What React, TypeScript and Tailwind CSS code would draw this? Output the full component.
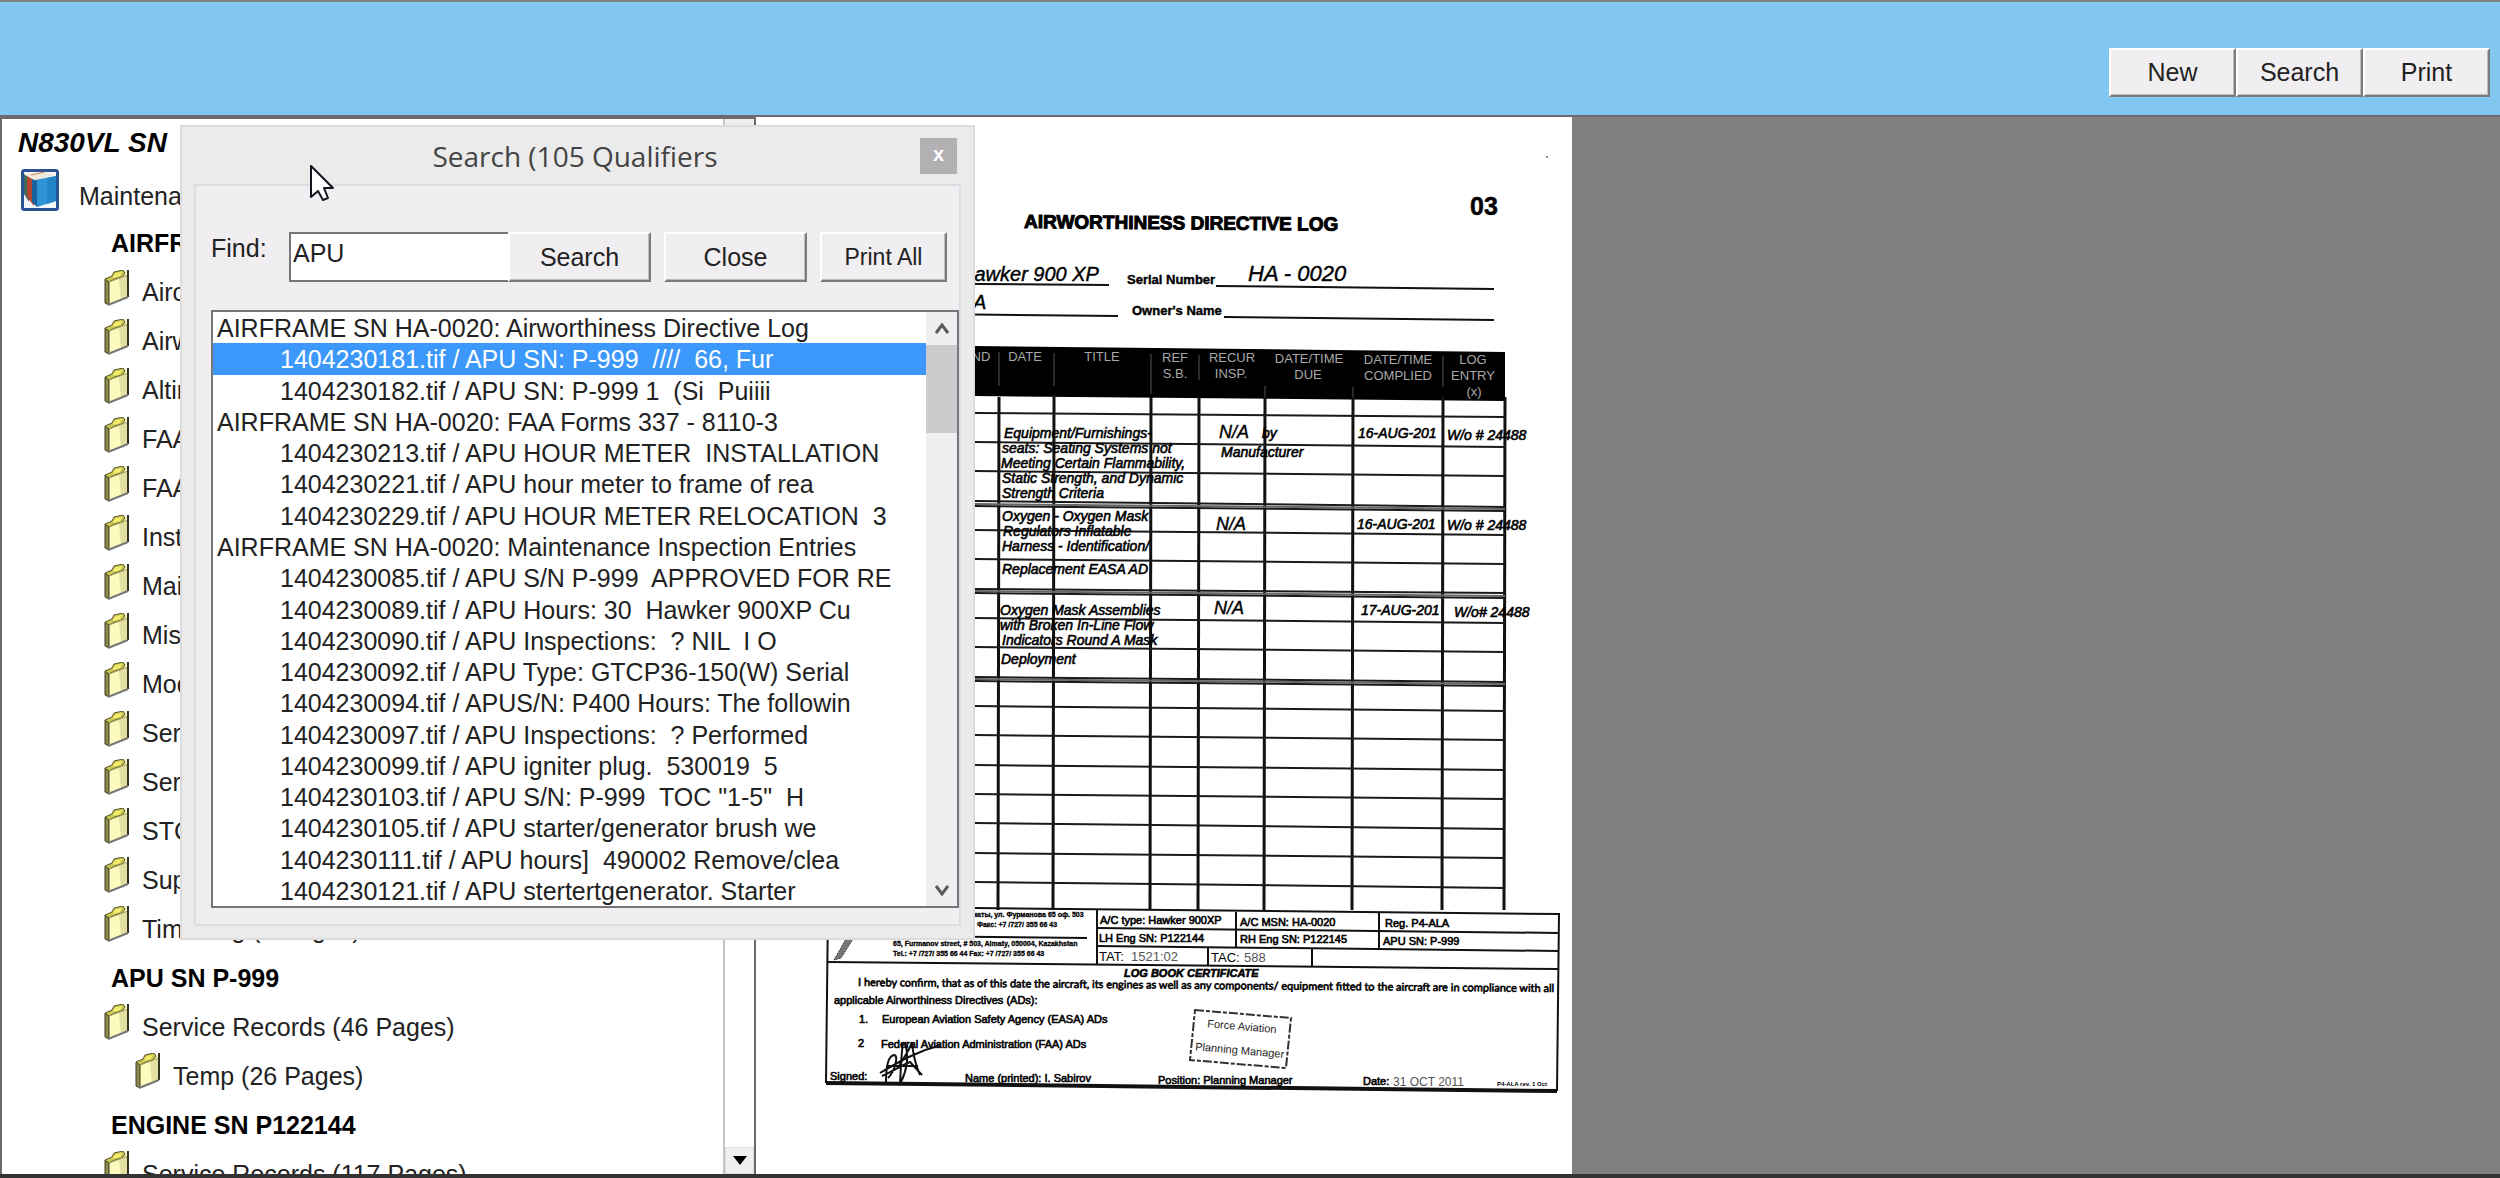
import { clsx } from 'clsx';

interface TreeItem {
  label: string;
  level: 0 | 1 | 2;
}

const tree: TreeItem[] = [
  { label: 'AIRFRAME SN HA-0020', level: 0 },
  { label: 'Aircraft Log', level: 1 },
  { label: 'Airworthiness Directive Log', level: 1 },
  { label: 'Altimeter Log', level: 1 },
  { label: 'FAA Forms 337 - 8110-3', level: 1 },
  { label: 'FAA Forms', level: 1 },
  { label: 'Installed Equipment', level: 1 },
  { label: 'Maintenance Inspection Entries', level: 1 },
  { label: 'Miscellaneous', level: 1 },
  { label: 'Modifications', level: 1 },
  { label: 'Service Bulletins', level: 1 },
  { label: 'Service Records', level: 1 },
  { label: 'STC', level: 1 },
  { label: 'Supplements', level: 1 },
  { label: 'Time Log (4 Pages)', level: 1 },
  { label: 'APU SN P-999', level: 0 },
  { label: 'Service Records (46 Pages)', level: 1 },
  { label: 'Temp (26 Pages)', level: 2 },
  { label: 'ENGINE SN P122144', level: 0 },
  { label: 'Service Records (117 Pages)', level: 1 },
];

const results = [
  { text: 'AIRFRAME SN HA-0020: Airworthiness Directive Log', group: true },
  { text: '1404230181.tif / APU SN: P-999  ////  66, Fur', selected: true },
  { text: '1404230182.tif / APU SN: P-999 1  (Si  Puiiii' },
  { text: 'AIRFRAME SN HA-0020: FAA Forms 337 - 8110-3', group: true },
  { text: '1404230213.tif / APU HOUR METER  INSTALLATION' },
  { text: '1404230221.tif / APU hour meter to frame of rea' },
  { text: '1404230229.tif / APU HOUR METER RELOCATION  3' },
  { text: 'AIRFRAME SN HA-0020: Maintenance Inspection Entries', group: true },
  { text: '1404230085.tif / APU S/N P-999  APPROVED FOR RE' },
  { text: '1404230089.tif / APU Hours: 30  Hawker 900XP Cu' },
  { text: '1404230090.tif / APU Inspections:  ? NIL  I O' },
  { text: '1404230092.tif / APU Type: GTCP36-150(W) Serial' },
  { text: '1404230094.tif / APUS/N: P400 Hours: The followin' },
  { text: '1404230097.tif / APU Inspections:  ? Performed' },
  { text: '1404230099.tif / APU igniter plug.  530019  5' },
  { text: '1404230103.tif / APU S/N: P-999  TOC "1-5"  H' },
  { text: '1404230105.tif / APU starter/generator brush we' },
  { text: '1404230111.tif / APU hours]  490002 Remove/clea' },
  { text: '1404230121.tif / APU stertertgenerator. Starter' },
];

const buttonClass =
  'flex items-center justify-center border-2 border-t-white border-l-white border-r-[#7d7b7e] border-b-[#7d7b7e] bg-[#f0eef1] leading-none text-[#222] shadow-[inset_-1px_-1px_0_#bbb]';

function BookIcon() {
  return (
    <svg viewBox="0 0 38 43" className="h-[43px] w-[38px] shrink-0" aria-hidden>
      <rect x="1.5" y="1.5" width="35" height="39" rx="2" fill="#f4f7fa" stroke="#2b5391" strokeWidth="3" />
      <path d="M3 5l5 4v24l-5-8z" fill="#3f6b5c" />
      <path d="M6 7l7 4v26l-7-9z" fill="#b5442f" />
      <path d="M3 5l16-2 16 3-20 5z" fill="#efe8da" />
      <path d="M10 6l14-3" stroke="#c9896d" />
      <path d="M14 11l21-4v25l-19 6z" fill="#2f94d3" />
      <path d="M11 10l5 2v26l-5-5z" fill="#17639d" />
      <path d="M26 9l9-2v25l-9 3z" fill="#2384c6" />
    </svg>
  );
}

function FolderIcon() {
  return (
    <svg viewBox="0 0 26 37" className="h-[37px] w-[26px] shrink-0" aria-hidden>
      <path d="M2 10L24 1v26L4 35z" fill="#fcfabd" />
      <path d="M15 9l8-4v22l-6 3z" fill="#e2dfa0" />
      <path d="M1 9l4 3v23l-4-2z" fill="#8c8a4c" stroke="#3a3a20" />
      <path d="M1 9l7-3 2-4 9-2 2 3-3 4-7 2-6 3z" fill="#c9c552" stroke="#55532a" />
      <path d="M9 6l3-3 6-1-2 4-6 2z" fill="#f2ee6c" />
      <path d="M5 12L24 5" stroke="#a5a268" />
      <path d="M24 0v27" stroke="#33331f" strokeWidth="2" />
      <path d="M4 35l20-8" stroke="#777" strokeWidth="2" />
    </svg>
  );
}

function Sidebar() {
  return (
    <aside className="flex w-[756px] shrink-0 border-t-2 border-r-2 border-l-2 border-[#6b6b6b] bg-white">
      <nav className="flex min-w-0 flex-1 flex-col overflow-hidden">
        <h1 className="pt-[6px] pl-4 text-[28px] leading-9 font-bold whitespace-nowrap text-black italic">
          N830VL SN
        </h1>
        <div className="flex h-[58px] shrink-0 items-center gap-5 pl-[19px]">
          <BookIcon />
          <a href="#" className="pt-3 text-[25px] leading-8">
            Maintenance Records
          </a>
        </div>
        <ul className="-mb-6 flex flex-1 flex-col">
          {tree.map((item, i) => (
            <li
              key={i}
              className={clsx(
                'flex flex-1 items-center gap-3',
                item.level === 0 && 'pl-[109px] font-bold text-black',
                item.level === 1 && 'pl-[102px]',
                item.level === 2 && 'pl-[133px]'
              )}
            >
              {item.level > 0 && (
                <span className="pb-2">
                  <FolderIcon />
                </span>
              )}
              <a href="#" className="text-[25px] leading-8 whitespace-nowrap">
                {item.label}
              </a>
            </li>
          ))}
        </ul>
      </nav>
      <div className="flex w-[31px] flex-col justify-between border-l-2 border-[#c4c4c4]">
        <button type="button" aria-label="Scroll up" className="h-7 bg-[#f0eef1]" />
        <button
          type="button"
          aria-label="Scroll down"
          className="flex h-[27px] items-center justify-center border border-[#ddd] bg-[#f0eef1]"
        >
          <svg viewBox="0 0 14 9" className="h-[9px] w-[14px]" aria-hidden>
            <path d="M0 0h14L7 9z" fill="#000" />
          </svg>
        </button>
      </div>
    </aside>
  );
}

// y on the left edge and on the right edge of every rule, the sheet was fed slightly askew
const rules = [
  [413, 417], [442, 447], [471, 476], [501, 507], [506, 511], [530, 535], [559, 564], [589, 593],
  [593, 598], [618, 623], [647, 652], [677, 682], [681, 686], [706, 711], [735, 740], [765, 770],
  [794, 799], [823, 829], [853, 858], [882, 888],
];

const columns = [999, 1054, 1151, 1199, 1265, 1353, 1443, 1505];

const headings: [number, number, string][] = [
  [981, 361, 'ND'], [1025, 361, 'DATE'], [1102, 361, 'TITLE'], [1175, 362, 'REF'], [1175, 378, 'S.B.'],
  [1232, 362, 'RECUR'], [1231, 378, 'INSP.'], [1309, 363, 'DATE/TIME'], [1308, 379, 'DUE'],
  [1398, 364, 'DATE/TIME'], [1398, 380, 'COMPLIED'], [1473, 364, 'LOG'], [1473, 380, 'ENTRY'], [1474, 396, '(x)'],
];

const notes: [number, number, string][] = [
  [1004, 438, 'Equipment/Furnishings-'],
  [1002, 453, 'seats: Seating Systems not'],
  [1001, 468, 'Meeting Certain Flammability,'],
  [1002, 483, 'Static Strength, and Dynamic'],
  [1002, 498, 'Strength Criteria'],
  [1002, 521, 'Oxygen - Oxygen Mask'],
  [1003, 536, 'Regulators Inflatable'],
  [1002, 551, 'Harness - Identification/'],
  [1002, 574, 'Replacement EASA AD'],
  [1000, 615, 'Oxygen Mask Assemblies'],
  [1000, 630, 'with Broken In-Line Flow'],
  [1002, 645, 'Indicators Round A Mask'],
  [1001, 664, 'Deployment'],
  [1221, 457, 'Manufacturer'],
  [1358, 438, '16-AUG-201'],
  [1447, 440, 'W/o # 24488'],
  [1357, 529, '16-AUG-201'],
  [1447, 530, 'W/o # 24488'],
  [1361, 615, '17-AUG-201'],
  [1454, 617, 'W/o# 24488'],
];

function ScannedPage() {
  return (
    <svg
      viewBox="756 117 816 1057"
      className="w-[816px] shrink-0 self-start bg-white"
      fontFamily="'Liberation Sans', Arial, sans-serif"
      role="img"
      aria-label="Airworthiness Directive Log, page 03"
    >
      <circle cx="1547" cy="157" r="1" fill="#666" />
      <text x="1024" y="228" fontSize="19" fontWeight="bold" stroke="#000" transform="rotate(0.5 1024 228)">
        AIRWORTHINESS DIRECTIVE LOG
      </text>
      <text x="1470" y="215" fontSize="25" fontWeight="bold" stroke="#000" strokeWidth="0.5">03</text>
      <g fontSize="13" fontWeight="bold" stroke="#000" strokeWidth="0.4">
        <text x="1127" y="284">Serial Number</text>
        <text x="1132" y="315">Owner's Name</text>
      </g>
      <g stroke="#111" strokeWidth="2">
        <path d="M840 283L1109 285M1216 286L1494 289M840 313L1118 316M1224 317L1494 320" />
      </g>
      <g fontSize="20" fontStyle="italic" stroke="#000" strokeWidth="0.4">
        <text x="960" y="281">Hawker 900 XP</text>
        <text x="1248" y="281" fontSize="22">HA - 0020</text>
        <text x="973" y="309">A</text>
      </g>

      {/* Directive table */}
      <path d="M820 345L975 346L1505 352V401L975 396L820 395z" fill="#000" />
      <g fontSize="13" fill="#a8a8a8" textAnchor="middle">
        {headings.map(([x, y, label]) => (
          <text key={`${x}-${y}`} x={x} y={y}>
            {label}
          </text>
        ))}
      </g>
      <path
        d="M999 352v34M1054 353v33M1151 354v40M1199 355v25M1265 386v12M1353 387v12M1443 356v31"
        stroke="#555"
      />
      <g stroke="#111" strokeWidth="3">
        {columns.map((x) => (
          <line key={x} x1={x} y1="397" x2={x - 1} y2="910" />
        ))}
      </g>
      <g stroke="#1a1a1a" strokeWidth="2">
        {rules.map(([left, right]) => (
          <line key={left} x1="975" y1={left} x2="1505" y2={right} />
        ))}
      </g>
      <path d="M975 504L1505 509M975 591L1505 596M975 679L1505 684" stroke="#666" strokeWidth="2" />
      <g fontSize="14" fontStyle="italic" stroke="#000" strokeWidth="0.6">
        {notes.map(([x, y, line]) => (
          <text key={`${x}-${y}`} x={x} y={y}>
            {line}
          </text>
        ))}
        <text x="1262" y="438">by</text>
      </g>
      <g fontSize="18" fontStyle="italic" stroke="#000" strokeWidth="0.4">
        <text x="1219" y="438">N/A</text>
        <text x="1216" y="530">N/A</text>
        <text x="1214" y="614">N/A</text>
      </g>

      {/* Certificate */}
      <g stroke="#111" strokeWidth="2" fill="none">
        <path d="M827 906L975 908L1559 914L1557 1091" />
        <path d="M828 906L826 1083" />
        <path d="M826 1083L1557 1091" strokeWidth="4" />
        <path d="M828 962L1558 969M1097 910V964M1236 912V947M1379 913V949M1208 947V965M1312 949V967" />
        <path d="M1097 928L1559 933M1097 946L1559 951M890 936L1087 938" />
      </g>
      <path d="M834 960l12-21h7l-12 19z" fill="#777" stroke="#333" strokeDasharray="2 1" />
      <g fontSize="7" fontWeight="bold" stroke="#000" strokeWidth="0.3">
        <text x="972" y="917">маты, ул. Фурманова 65 оф. 503</text>
        <text x="977" y="927">Факс: +7 /727/ 355 66 43</text>
        <text x="893" y="946">65, Furmanov street, # 503, Almaty, 050004, Kazakhstan</text>
        <text x="893" y="956">Tel.: +7 /727/ 355 66 44  Fax: +7 /727/ 355 66 43</text>
      </g>
      <g fontSize="11" stroke="#000" strokeWidth="0.6">
        <text x="1100" y="924">A/C type: Hawker 900XP</text>
        <text x="1240" y="926">A/C MSN: HA-0020</text>
        <text x="1385" y="927">Reg. P4-ALA</text>
        <text x="1099" y="942">LH Eng SN: P122144</text>
        <text x="1240" y="943">RH Eng SN: P122145</text>
        <text x="1383" y="945">APU SN: P-999</text>
        <text x="1124" y="977" fontWeight="bold" fontStyle="italic">LOG BOOK CERTIFICATE</text>
        <text x="858" y="986" fontFamily="Lato, sans-serif" transform="rotate(0.5 858 986)">
          I hereby confirm, that as of this date the aircraft, its engines as well as any components/ equipment fitted to the aircraft are in compliance with all
        </text>
        <text x="834" y="1004">applicable Airworthiness Directives (ADs):</text>
        <text x="859" y="1023">1.</text>
        <text x="882" y="1023">European Aviation Safety Agency (EASA) ADs</text>
        <text x="858" y="1047">2</text>
        <text x="881" y="1048">Federal Aviation Administration (FAA) ADs</text>
        <text x="830" y="1080">Signed:</text>
        <text x="965" y="1082">Name (printed): I. Sabirov</text>
        <text x="1158" y="1084">Position: Planning Manager</text>
        <text x="1363" y="1085">Date:</text>
      </g>
      <g fontSize="13">
        <text x="1099" y="961">TAT:</text>
        <text x="1211" y="962">TAC:</text>
      </g>
      <g fontSize="13" fill="#555">
        <text x="1131" y="961">1521:02</text>
        <text x="1244" y="962">588</text>
        <text x="1393" y="1086" fontSize="12">31 OCT 2011</text>
      </g>
      <text x="1497" y="1086" fontSize="6" fontWeight="bold">P4-ALA rev. 1 Oct</text>
      <path d="M1195 1010L1291 1018L1286 1068L1190 1060z" fill="none" stroke="#333" strokeWidth="2" strokeDasharray="9 2 4 2" />
      <g fontSize="11" fill="#222" transform="rotate(5 1193 1049)">
        <text x="1205" y="1026">Force Aviation</text>
        <text x="1195" y="1050">Planning Manager</text>
      </g>
      <path
        d="M880 1073c20-12 38-22 61-28M882 1076c10-4 22-12 28-14l12 13M886 1082c0-12 1-26 8-27 5 0 1 16-6 23M900 1083c1-14 1-28 3-40M905 1042c4 14 3 26-4 40M912 1042c1 12 4 24 8 33M898 1068c5-10 12-18 14-26M888 1066h30"
        fill="none"
        stroke="#111"
        strokeWidth="2"
      />
    </svg>
  );
}

function SearchDialog() {
  return (
    <section
      role="dialog"
      aria-labelledby="search-title"
      className="absolute top-[125px] left-[180px] flex h-[815px] w-[795px] flex-col border-2 border-[#dcdcdc] bg-[#ebebeb] px-3 pb-3"
    >
      <header className="flex h-[57px] shrink-0 items-center">
        <h2
          id="search-title"
          className="flex-1 pl-9 text-center font-['Open_Sans',sans-serif] text-[28px] leading-8 text-[#444]"
        >
          Search (105 Qualifiers
        </h2>
        <button
          type="button"
          aria-label="Close dialog"
          className="mr-1 flex h-9 w-[37px] items-center justify-center bg-[#b3b0b3] pb-1 text-[20px] leading-none font-bold text-white"
        >
          x
        </button>
      </header>
      <div className="flex min-h-0 flex-1 flex-col border-2 border-[#dedce0] bg-[#f0eef1] pt-[46px] pb-4 pl-[15px]">
        <form className="flex h-[50px] shrink-0 pr-3" onSubmit={(e) => e.preventDefault()}>
          <label htmlFor="find" className="w-[78px] text-[25px] leading-8 text-[#222]">
            Find:
          </label>
          <input
            id="find"
            type="text"
            defaultValue="APU"
            className="w-[219px] rounded-none border-2 border-r-0 border-[#77757a] bg-white pb-2 pl-[2px] text-[25px] leading-8 text-[#222] outline-none"
          />
          <button type="submit" className={clsx(buttonClass, 'w-[143px] text-[25px]')}>
            Search
          </button>
          <button type="button" className={clsx(buttonClass, 'ml-[13px] w-[143px] text-[25px]')}>
            Close
          </button>
          <button type="button" className={clsx(buttonClass, 'ml-[13px] w-[127px] text-[23px]')}>
            Print All
          </button>
        </form>
        <div className="mt-[28px] flex min-h-0 flex-1 border-2 border-[#77757a] bg-white">
          <ul role="listbox" aria-label="Results" className="flex min-w-0 flex-1 flex-col">
            {results.map((row) => (
              <li
                key={row.text}
                role="option"
                aria-selected={!!row.selected}
                className={clsx(
                  'flex min-h-0 flex-1 items-center overflow-hidden pt-[2px] text-[25px] leading-none whitespace-pre',
                  row.group ? 'pl-1' : 'pl-[67px]',
                  row.selected ? 'bg-[#3c98fb] text-white' : 'text-[#222]'
                )}
              >
                {row.text}
              </li>
            ))}
          </ul>
          <div className="flex w-[31px] flex-col bg-[#f0eef1]">
            <button type="button" aria-label="Scroll up" className="flex h-[33px] items-center justify-center">
              <svg viewBox="0 0 14 12" className="h-3 w-[14px]" aria-hidden>
                <path d="M1 10l6-8 6 8" fill="none" stroke="#5a5a5a" strokeWidth="3" />
              </svg>
            </button>
            <div className="h-[88px] bg-[#cdcbce]" />
            <button type="button" aria-label="Scroll down" className="mt-auto flex h-[33px] items-center justify-center">
              <svg viewBox="0 0 14 12" className="h-3 w-[14px]" aria-hidden>
                <path d="M1 2l6 8 6-8" fill="none" stroke="#5a5a5a" strokeWidth="3" />
              </svg>
            </button>
          </div>
        </div>
      </div>
    </section>
  );
}

export default function App() {
  return (
    <div className="relative flex h-screen flex-col overflow-hidden border-b-4 border-[#333] bg-[#808080] font-['Liberation_Sans',Arial,sans-serif] text-[#222]">
      <header className="flex h-[115px] shrink-0 items-end justify-end border-t-2 border-[#808080] bg-[#82c7f0] pr-[10px] pb-[18px] text-[25px]">
        <button type="button" className={clsx(buttonClass, 'h-[49px] w-[127px]')}>
          New
        </button>
        <button type="button" className={clsx(buttonClass, 'h-[49px] w-[127px]')}>
          Search
        </button>
        <button type="button" className={clsx(buttonClass, 'h-[49px] w-[127px]')}>
          Print
        </button>
      </header>
      <main className="flex min-h-0 flex-1 border-t-2 border-[#6b6b6b]">
        <Sidebar />
        <ScannedPage />
      </main>

      <SearchDialog />

      <svg viewBox="0 0 24 38" className="absolute top-[164px] left-[310px] h-[38px] w-6" aria-hidden>
        <path
          d="M1 2v31l7-6 5 9 5-2-4-10h9z"
          fill="#fff"
          stroke="#14141f"
          strokeWidth="2"
          strokeLinejoin="round"
        />
      </svg>
    </div>
  );
}
